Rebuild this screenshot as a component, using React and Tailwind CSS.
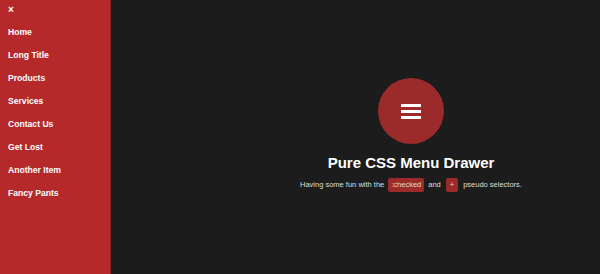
import React from 'react';

const items = ['Home', 'Long Title', 'Products', 'Services', 'Contact Us', 'Get Lost', 'Another Item', 'Fancy Pants'];

const App = () => {
  return (
    <div className="flex h-[274px] w-[600px] overflow-hidden bg-[#1c1c1c] font-['Liberation_Sans',Arial,sans-serif]">
      {/* Drawer */}
      <nav className="w-[111px] shrink-0 bg-[#b5292b] border-r border-[#8a2022] pt-[4px]">
        <div className="px-[8px] h-[11px] text-[10px] font-bold leading-[11px] text-white">×</div>
        <ul className="mt-[6px]">
          {items.map((item) => (
            <li key={item} className="h-[23px] px-[8px] text-[8.6px] font-bold leading-[23px] text-white">
              {item}
            </li>
          ))}
        </ul>
      </nav>

      {/* Main */}
      <main className="w-[600px] shrink-0 flex flex-col items-center pt-[78px]">
        <div className="flex h-[66px] w-[66px] items-center justify-center rounded-full bg-[#9b2b2b]">
          <div className="flex flex-col gap-[3px]">
            <span className="block h-[3px] w-[20px] bg-white" />
            <span className="block h-[3px] w-[20px] bg-white" />
            <span className="block h-[3px] w-[20px] bg-white" />
          </div>
        </div>
        <h1 className="mt-[8px] text-[15px] font-bold leading-[22px] text-white">Pure CSS Menu Drawer</h1>
        <p className="mt-[4px] flex items-center text-[7.5px] leading-[12px] text-[#dddddd]">
          Having some fun with the
          <code className="mx-[4px] rounded-[2px] bg-[#9b2b2b] px-[3px] py-[1px] font-['Liberation_Sans',Arial,sans-serif]">:checked</code>
          and
          <code className="mx-[5px] rounded-[2px] bg-[#9b2b2b] px-[4px] py-[1px] font-['Liberation_Sans',Arial,sans-serif]">+</code>
          pseudo selectors.
        </p>
      </main>
    </div>
  );
};

export default App;
